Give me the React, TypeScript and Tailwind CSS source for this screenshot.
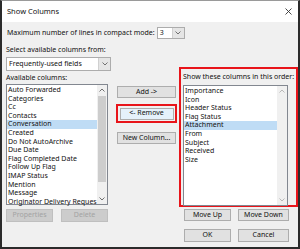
import React from "react"

// Outlook "Show Columns" dialog — compact replica at 300x249.

const leftItems = [
  "Auto Forwarded",
  "Categories",
  "Cc",
  "Contacts",
  "Conversation",
  "Created",
  "Do Not AutoArchive",
  "Due Date",
  "Flag Completed Date",
  "Follow Up Flag",
  "IMAP Status",
  "Mention",
  "Message",
  "Originator Delivery Reques",
]

const rightItems = [
  "Importance",
  "Icon",
  "Header Status",
  "Flag Status",
  "Attachment",
  "From",
  "Subject",
  "Received",
  "Size",
]

function Chevron({ up = false, light = false }: { up?: boolean; light?: boolean }) {
  return (
    <svg width="6" height="4" viewBox="0 0 6 4" className="block">
      <path
        d={up ? "M0.5 3.5 L3 1 L5.5 3.5" : "M0.5 0.5 L3 3 L5.5 0.5"}
        fill="none"
        stroke={light ? "#b8b8b8" : "#707070"}
        strokeWidth="1"
      />
    </svg>
  )
}

function Btn({
  children,
  className = "",
  disabled = false,
}: {
  children: React.ReactNode
  className?: string
  disabled?: boolean
}) {
  return (
    <div
      className={
        "flex items-center justify-center border " +
        (disabled
          ? "border-[#bfbfbf] bg-[#cccccc] text-[#a3a3a3] "
          : "border-[#adadad] bg-[#e1e1e1] text-[#111] ") +
        className
      }
    >
      {children}
    </div>
  )
}

function ListBox({
  items,
  selected,
  thumb,
  className = "",
}: {
  items: string[]
  selected: number
  thumb: boolean
  className?: string
}) {
  return (
    <div className={"flex border border-[#828790] bg-white " + className}>
      <div className="min-w-0 flex-1 pt-[1px]">
        {items.map((it, i) => (
          <div
            key={it}
            className={
              "h-[8.6px] truncate whitespace-nowrap pl-[1px] leading-[8.6px] " +
              (i === selected ? "bg-[#bfdcf5]" : "")
            }
          >
            {it}
          </div>
        ))}
      </div>
      <div className="flex w-[10px] flex-col items-center bg-[#f0f0f0]">
        <div className="flex h-[10px] items-center">
          <Chevron up light={!thumb} />
        </div>
        <div className="w-full flex-1 px-[1px]">
          {thumb && <div className="mt-[1px] h-[86px] w-full bg-[#cdcdcd]" />}
        </div>
        <div className="flex h-[10px] items-center">
          <Chevron light={!thumb} />
        </div>
      </div>
    </div>
  )
}

export default function App() {
  return (
    <div className="flex h-[249px] w-[300px] flex-col border-x-2 border-b-2 border-t border-x-[#2b2b2b] border-b-[#2b2b2b] border-t-[#9a9a9a] bg-[#f0f0f0] font-['Noto_Sans',sans-serif] text-[7px] text-[#111]">
      {/* ── Title bar ── */}
      <div className="flex h-[21px] shrink-0 items-center justify-between bg-white pl-[5px] pr-[6px]">
        <span className="text-[7.5px]">Show Columns</span>
        <svg width="7" height="7" viewBox="0 0 7 7">
          <path d="M0.5 0.5 L6.5 6.5 M6.5 0.5 L0.5 6.5" stroke="#333" strokeWidth="0.9" />
        </svg>
      </div>

      {/* ── Compact mode lines ── */}
      <div className="mt-[5px] flex items-center pl-[5px]">
        <span>Maximum number of lines in compact mode:</span>
        <div className="ml-[2px] flex h-[12px] w-[28px] border border-[#acacac] bg-white">
          <span className="flex-1 pl-[2px] leading-[10px]">3</span>
          <div className="flex w-[12px] items-center justify-center border-l border-[#d0d0d0] bg-[#e5e5e5]">
            <Chevron />
          </div>
        </div>
      </div>

      {/* ── Three columns ── */}
      <div className="mt-[6px] flex items-start pl-[4px]">
        {/* Left */}
        <div className="flex w-[105px] flex-col">
          <div className="h-[10px] leading-[10px]">Select available columns from:</div>
          <div className="mt-[2px] flex h-[14px] w-[105px] border border-[#acacac] bg-white">
            <span className="flex-1 pl-[2px] leading-[12px]">Frequently-used fields</span>
            <div className="flex w-[12px] items-center justify-center border-l border-[#d0d0d0] bg-[#e5e5e5]">
              <Chevron />
            </div>
          </div>
          <div className="mt-[2px] h-[10px] leading-[10px]">Available columns:</div>
          <ListBox items={leftItems} selected={4} thumb className="mt-[1px] h-[121px] w-[102px]" />
          <div className="mt-[4px] flex gap-[8px]">
            <Btn disabled className="h-[13px] w-[47px]">Properties</Btn>
            <Btn disabled className="h-[13px] w-[47px]">Delete</Btn>
          </div>
        </div>

        {/* Middle */}
        <div className="ml-[5px] mt-[41px] flex w-[61px] flex-col">
          <Btn className="mx-[1px] h-[12px]">Add -&gt;</Btn>
          <div className="mt-[6px] border-2 border-[#e8141a] p-[1.5px]">
            <Btn className="h-[12px] border-[#7eb4ea] bg-[#e5f1fb]">&lt;- Remove</Btn>
          </div>
          <Btn className="mx-[1px] mt-[9px] h-[12px]">New Column...</Btn>
        </div>

        {/* Right */}
        <div className="ml-[2px] mt-[22px] flex w-[119px] flex-col">
          <div className="h-[140px] border-2 border-[#e8141a] pl-[2px] pt-[3px]">
            <div className="h-[10px] whitespace-nowrap leading-[10px]">Show these columns in this order:</div>
            <ListBox items={rightItems} selected={4} thumb={false} className="mt-[3px] h-[121px] w-[105px]" />
          </div>
          <div className="ml-[5px] mt-[2px] flex gap-[7px]">
            <Btn className="h-[12px] w-[47px]">Move Up</Btn>
            <Btn className="h-[12px] w-[51px]">Move Down</Btn>
          </div>
          <div className="ml-[5px] mt-[8px] flex gap-[7px]">
            <Btn className="h-[13px] w-[47px] border-[#0078d7]">OK</Btn>
            <Btn className="h-[13px] w-[51px]">Cancel</Btn>
          </div>
        </div>
      </div>
    </div>
  )
}
